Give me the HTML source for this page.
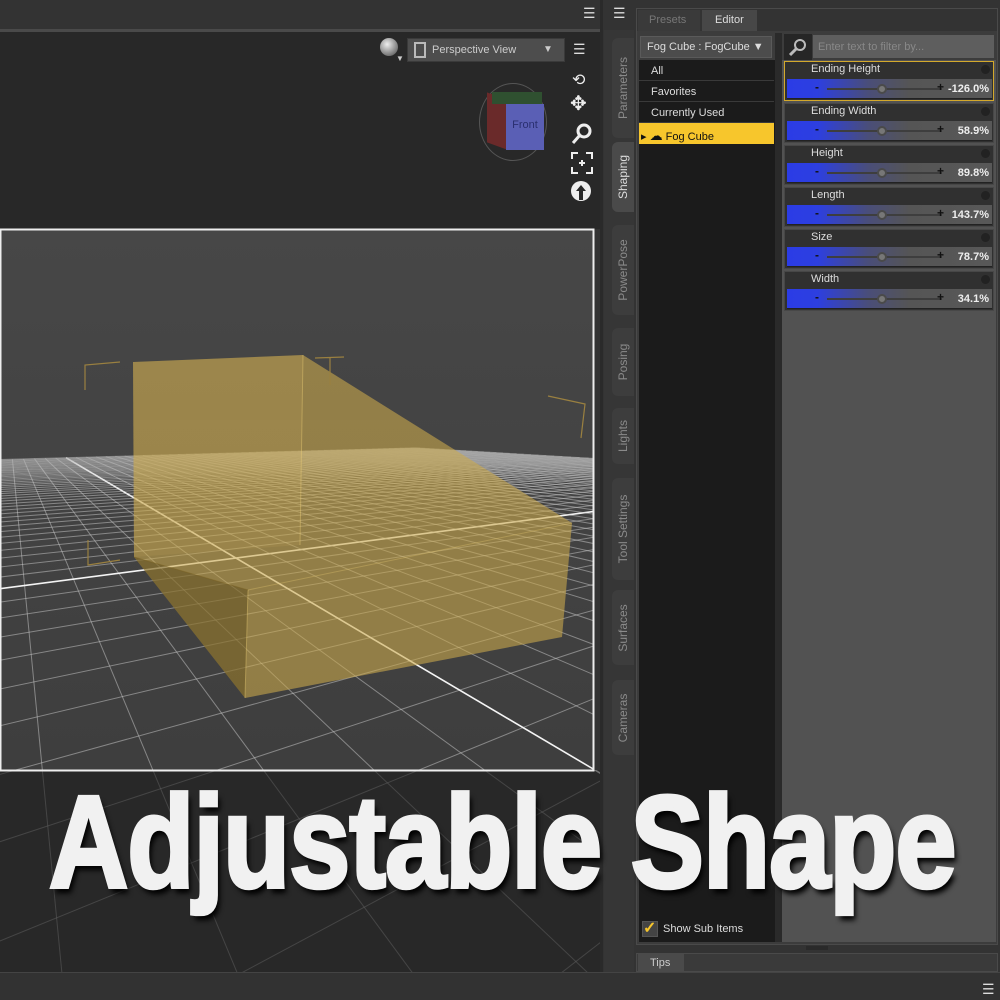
<!DOCTYPE html>
<html style="overflow:hidden"><head><meta charset="utf-8">
<style>
*{margin:0;padding:0;box-sizing:border-box}
body{width:1000px;height:1000px;overflow:hidden;background:#333;font-family:"Liberation Sans",sans-serif;position:relative}
.a{position:absolute}
.t{color:#ddd;font-size:11px}
.vt{position:absolute;left:612px;width:22px;background:#3d3d3d;border-radius:6px 0 0 6px}
.vt span{position:absolute;left:50%;top:50%;transform:translate(-50%,-50%) rotate(-90deg);white-space:nowrap;color:#8a8a8a;font-size:12px}
.row{position:absolute;left:639px;width:135px;height:21px;border-bottom:1px solid #3a3a3a;color:#ddd;font-size:11px;padding:5px 0 0 12px}
.pb{position:absolute;left:784px;width:210px;height:40px;background:#303030;border:1px solid #474747}
.pb .lb{position:absolute;left:26px;top:1px;color:#ddd;font-size:11px}
.pb .dot{position:absolute;right:3px;top:3px;width:9px;height:9px;border-radius:50%;background:#222}
.pb .sl{position:absolute;left:2px;top:17px;width:205px;height:20px;background:linear-gradient(90deg,#2b3ce6 0%,#2d3fe0 15%,#4a4e78 40%,#555 60%,#585858 100%);border-bottom:1px solid #222}
.sl .tr{position:absolute;left:40px;top:9px;width:115px;height:2px;background:#3e3e3e}
.sl .k{position:absolute;left:90px;top:5px;width:10px;height:10px;border-radius:50%;background:#777;border:2px solid #4a4a4a}
.sl .m{position:absolute;left:28px;top:1px;color:#111;font-size:12px;font-weight:bold}
.sl .p{position:absolute;left:150px;top:1px;color:#111;font-size:12px;font-weight:bold}
.sl .v{position:absolute;right:3px;top:4px;color:#eee;font-size:11px;font-weight:bold}
</style></head><body>
<div class="a" style="left:0;top:0;width:603px;height:30px;background:#333"></div>
<div class="a" style="left:0;top:29px;width:603px;height:3px;background:#4a4a4a"></div>
<div class="a" style="left:0;top:32px;width:600px;height:197px;background:#282828"></div>
<svg class="a" style="left:0;top:0" width="600" height="972" id="sv">
<defs>
<clipPath id="cin"><rect x="0" y="230" width="593" height="540"/></clipPath>
<clipPath id="cout"><rect x="0" y="770" width="600" height="202"/></clipPath>
<linearGradient id="bg" x1="0" y1="0" x2="0" y2="1"><stop offset="0" stop-color="#474747"/><stop offset="1" stop-color="#3e3e3e"/></linearGradient>
<linearGradient id="fade" x1="0" y1="0" x2="0" y2="1"><stop offset="0" stop-color="#454545" stop-opacity="0.6"/><stop offset="1" stop-color="#454545" stop-opacity="0"/></linearGradient>
</defs>
<rect x="0" y="770" width="600" height="202" fill="#282828"/>
<rect x="0" y="230" width="593" height="540" fill="url(#bg)"/>
<g id="gin" clip-path="url(#cin)"></g>
<g id="gout" clip-path="url(#cout)" opacity="0.35"></g>
<rect x="0" y="420" width="593" height="50" fill="url(#fade)"/>
<g clip-path="url(#cin)">
<polygon points="133,362 303,355 572,523 562,637 245,698 134,557" fill="rgba(205,170,75,0.58)"/>
<polygon points="133,362 303,355 300,545 134,557" fill="rgba(215,185,100,0.12)"/>
<polygon points="134,557 248,590 245,698" fill="rgba(70,55,15,0.35)"/>
<line x1="303" y1="355" x2="300" y2="545" stroke="rgba(240,210,120,0.4)"/>
<line x1="248" y1="590" x2="245" y2="698" stroke="rgba(240,210,120,0.4)"/>
<line x1="248" y1="590" x2="572" y2="523" stroke="rgba(240,210,120,0.3)"/>
<line x1="134" y1="557" x2="248" y2="590" stroke="rgba(120,95,30,0.4)"/>
<g stroke="#9a8040" stroke-width="1.2" fill="none">
<path d="M85,390 V365 L120,362"/><path d="M315,358 L344,357 M330,357 V385"/>
<path d="M548,396 L585,404 L581,438"/><path d="M88,540 V565 L120,560"/>
</g>
</g>
<rect x="0.5" y="229.5" width="593" height="541" fill="none" stroke="#eee" stroke-width="2"/>
</svg>
<script>
(function(){
var ns="http://www.w3.org/2000/svg",f=530,cx=300,hy=424;
var n1=Math.hypot(291,530),d1=[-291/n1,530/n1],n2=Math.hypot(967,530),d2=[967/n2,530/n2];
var O=[-0.478,3.955],s=0.28,N=48;
function P(u,v){var X=O[0]+u*d1[0]+v*d2[0],Z=O[1]+u*d1[1]+v*d2[1];return [cx+f*X/Z,hy+f/Z,Z];}
function seg(g,a,col,w){
 var zmin=0.25,t0=-N*s,t1=N*s;
 var p0=a(t0),p1=a(t1),z0=p0[2],z1=p1[2];
 if(z0<zmin&&z1<zmin)return;
 if(z0<zmin){var k=(zmin-z0)/(z1-z0);t0=t0+k*(t1-t0);}
 else if(z1<zmin){var k=(zmin-z0)/(z1-z0);t1=t0+k*(t1-t0);}
 p0=a(t0);p1=a(t1);
 var l=document.createElementNS(ns,"line");
 l.setAttribute("x1",p0[0].toFixed(1));l.setAttribute("y1",p0[1].toFixed(1));
 l.setAttribute("x2",p1[0].toFixed(1));l.setAttribute("y2",p1[1].toFixed(1));
 l.setAttribute("stroke",col);l.setAttribute("stroke-width",w);g.appendChild(l);
}
["gin","gout"].forEach(function(id){
 var g=document.getElementById(id);
 for(var i=-N;i<=N;i++){
  var v=i*s,ax=(i==0);
  seg(g,function(u){return P(u,v)},ax?"#f4f4f4":"rgba(205,205,205,0.5)",ax?1.6:1);
  seg(g,function(u){return P(v,u)},ax?"#f4f4f4":"rgba(205,205,205,0.5)",ax?1.6:1);
 }
});
})();
</script>
<div class="a" style="left:380px;top:38px;width:18px;height:18px;border-radius:50%;background:radial-gradient(circle at 40% 35%,#eee,#888 60%,#444)"></div>
<div class="a" style="left:396px;top:54px;color:#ccc;font-size:8px">▼</div>
<div class="a" style="left:407px;top:38px;width:158px;height:24px;background:#4d4d4d;border:1px solid #3a3a3a"></div>
<div class="a" style="left:414px;top:42px;width:12px;height:16px;border:2px solid #bbb"></div>
<div class="a t" style="left:432px;top:44px;color:#ccc">Perspective View</div>
<div class="a" style="left:543px;top:44px;color:#ccc;font-size:10px">▼</div>
<div class="a" style="left:573px;top:42px;color:#ddd;font-size:14px;line-height:14px">☰</div>
<div class="a" style="left:479px;top:83px;width:68px;height:78px;border-radius:50%;border:1px solid #555"></div>
<div class="a" style="left:487px;top:96px;width:20px;height:50px;background:#6a2a2a;transform:skewY(20deg)"></div>
<div class="a" style="left:492px;top:92px;width:50px;height:12px;background:#2f5030"></div>
<div class="a" style="left:506px;top:104px;width:38px;height:46px;background:#5a5fb5;color:#2a2f70;font-size:11px;padding-top:15px;text-align:center">Front</div>
<div class="a" style="left:572px;top:70px;color:#eee;font-size:16px">⟲</div>
<div class="a" style="left:570px;top:94px;color:#eee;font-size:20px;line-height:20px">✥</div>
<svg class="a" style="left:570px;top:122px" width="24" height="24"><circle cx="14" cy="9" r="6" stroke="#eee" stroke-width="3" fill="none"/><line x1="10" y1="13" x2="3" y2="21" stroke="#eee" stroke-width="3"/></svg>
<svg class="a" style="left:570px;top:151px" width="24" height="24" stroke="#eee" stroke-width="2" fill="none"><path d="M2,8V2H8M16,2H22V8M22,16V22H16M8,22H2V16M12,9V15M9,12H15"/></svg>
<svg class="a" style="left:570px;top:180px" width="24" height="24"><circle cx="11" cy="11" r="10" fill="#eee"/><path d="M11,5 L16,11 H13 V20 H9 V11 H6Z" fill="#282828"/></svg>
<div class="a" style="left:49px;top:776px;width:1000px;height:130px;transform-origin:0 0;transform:scaleX(0.837);font-size:131px;font-weight:bold;color:#f1f1f1;-webkit-text-stroke:4px #f1f1f1;letter-spacing:-1px;text-shadow:4px 6px 6px #000;white-space:nowrap;line-height:1;z-index:5">Adjustable Shape</div>
<div class="a" style="left:600px;top:0;width:3px;height:972px;background:#2a2a2a"></div>
<div class="a" style="left:603px;top:0;width:397px;height:972px;background:#333"></div>
<div class="a" style="left:583px;top:6px;color:#ddd;font-size:14px;line-height:14px">☰</div>
<div class="a" style="left:613px;top:6px;color:#ddd;font-size:14px;line-height:14px">☰</div>
<div class="a" style="left:604px;top:30px;width:30px;height:942px;background:#363636"></div>
<div class="vt" style="top:38px;height:100px"><span>Parameters</span></div>
<div class="vt" style="top:142px;height:70px;background:#4a4a4a"><span style="color:#ddd">Shaping</span></div>
<div class="vt" style="top:225px;height:90px"><span>PowerPose</span></div>
<div class="vt" style="top:328px;height:68px"><span>Posing</span></div>
<div class="vt" style="top:408px;height:56px"><span>Lights</span></div>
<div class="vt" style="top:478px;height:102px"><span>Tool Settings</span></div>
<div class="vt" style="top:590px;height:75px"><span>Surfaces</span></div>
<div class="vt" style="top:680px;height:75px"><span>Cameras</span></div>
<div class="a" style="left:636px;top:8px;width:362px;height:937px;background:#3c3c3c;border:1px solid #4a4a4a"></div>
<div class="a" style="left:637px;top:9px;width:360px;height:22px;background:#333"></div>
<div class="a" style="left:638px;top:10px;width:62px;height:21px;background:#3a3a3a;color:#777;font-size:11px;padding:4px 0 0 11px">Presets</div>
<div class="a" style="left:702px;top:10px;width:55px;height:21px;background:#474747;color:#ddd;font-size:11px;padding:4px 0 0 13px">Editor</div>
<div class="a" style="left:639px;top:60px;width:136px;height:882px;background:#1b1b1b"></div>
<div class="a" style="left:640px;top:36px;width:132px;height:22px;background:#4c4c4c;border:1px solid #5a5a5a;color:#ddd;font-size:11px;padding:4px 0 0 6px">Fog Cube : FogCube ▼</div>
<div class="row" style="top:60px">All</div>
<div class="row" style="top:81px">Favorites</div>
<div class="row" style="top:102px">Currently Used</div>
<div class="row" style="top:123px;background:#f7c62c;color:#111;padding-left:2px;border:none">▸ <span style="font-size:13px">☁</span> Fog Cube</div>
<div class="a" style="left:775px;top:33px;width:7px;height:909px;background:#2a2a2a"></div>
<div class="a" style="left:782px;top:60px;width:214px;height:882px;background:#525252"></div>
<div class="a" style="left:784px;top:34px;width:28px;height:26px;background:#262626"></div>
<svg class="a" style="left:788px;top:38px" width="20" height="20"><circle cx="12" cy="7" r="5" stroke="#bbb" stroke-width="2" fill="none"/><line x1="8" y1="11" x2="2" y2="17" stroke="#bbb" stroke-width="3"/></svg>
<div class="a" style="left:813px;top:35px;width:181px;height:23px;background:#5e5e5e;color:#888;font-size:11px;padding:6px 0 0 5px">Enter text to filter by...</div>
<div class="pb" style="top:61px;border:1px solid #d4a92c"><div class="lb">Ending Height</div><div class="dot"></div><div class="sl"><div class="tr"></div><div class="k"></div><div class="m">-</div><div class="p">+</div><div class="v">-126.0%</div></div></div>
<div class="pb" style="top:103px"><div class="lb">Ending Width</div><div class="dot"></div><div class="sl"><div class="tr"></div><div class="k"></div><div class="m">-</div><div class="p">+</div><div class="v">58.9%</div></div></div>
<div class="pb" style="top:145px"><div class="lb">Height</div><div class="dot"></div><div class="sl"><div class="tr"></div><div class="k"></div><div class="m">-</div><div class="p">+</div><div class="v">89.8%</div></div></div>
<div class="pb" style="top:187px"><div class="lb">Length</div><div class="dot"></div><div class="sl"><div class="tr"></div><div class="k"></div><div class="m">-</div><div class="p">+</div><div class="v">143.7%</div></div></div>
<div class="pb" style="top:229px"><div class="lb">Size</div><div class="dot"></div><div class="sl"><div class="tr"></div><div class="k"></div><div class="m">-</div><div class="p">+</div><div class="v">78.7%</div></div></div>
<div class="pb" style="top:271px"><div class="lb">Width</div><div class="dot"></div><div class="sl"><div class="tr"></div><div class="k"></div><div class="m">-</div><div class="p">+</div><div class="v">34.1%</div></div></div>
<div class="a" style="left:642px;top:921px;width:16px;height:16px;background:#444;border:1px solid #555;color:#f7c62c;font-size:16px;line-height:14px;font-weight:bold">✓</div>
<div class="a t" style="left:663px;top:923px">Show Sub Items</div>
<div class="a" style="left:806px;top:946px;width:22px;height:4px;background:#2a2a2a"></div>
<div class="a" style="left:636px;top:953px;width:362px;height:19px;background:#3a3a3a;border:1px solid #4a4a4a"></div>
<div class="a" style="left:638px;top:954px;width:46px;height:18px;background:#4a4a4a;color:#ccc;font-size:11px;padding:3px 0 0 12px">Tips</div>
<div class="a" style="left:0;top:972px;width:1000px;height:28px;background:#323232;border-top:1px solid #444"></div>
<div class="a" style="left:982px;top:982px;color:#ddd;font-size:14px;line-height:14px">☰</div>
</body></html>
